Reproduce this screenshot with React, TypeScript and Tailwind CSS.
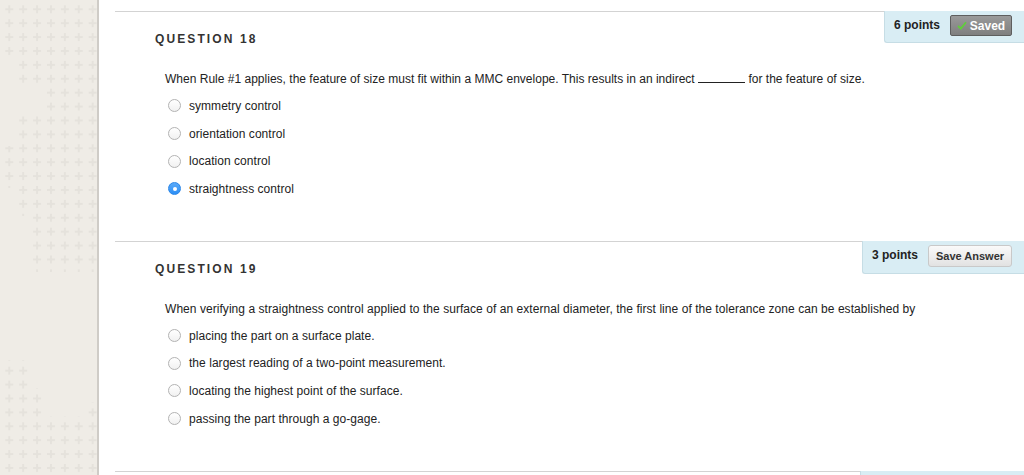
import React from "react";

const font = { fontFamily: '"Liberation Sans", Arial, Helvetica, sans-serif' };

function Radio({ checked }: { checked?: boolean }) {
  if (checked) {
    return (
      <span className="flex h-[13px] w-[13px] items-center justify-center rounded-full bg-gradient-to-b from-[#5aaaf9] to-[#2a8ef5] border border-[#2a86e8]">
        <span className="h-[4px] w-[4px] rounded-full bg-white" />
      </span>
    );
  }
  return (
    <span className="block h-[13px] w-[13px] rounded-full border border-[#b3b3b3] bg-gradient-to-b from-white to-[#f1f1f1]" />
  );
}

function Sidebar() {
  return (
    <div className="relative w-[99px] shrink-0 bg-[#efece6] border-r-2 border-[#cfccc7]">
      <svg className="absolute inset-0" width="97" height="475">
        <defs>
          <pattern id="plus" x="2.3" y="2.3" width="13.9" height="13.9" patternUnits="userSpaceOnUse">
            <rect x="3" y="6" width="8" height="2" fill="#e5e2dc" />
            <rect x="6" y="3" width="2" height="8" fill="#e5e2dc" />
          </pattern>
        </defs>
        <rect x="0" y="0" width="97" height="60" fill="url(#plus)" />
        <rect x="14" y="60" width="83" height="28" fill="url(#plus)" />
        <rect x="42" y="88" width="55" height="28" fill="url(#plus)" />
        <rect x="14" y="116" width="83" height="30" fill="url(#plus)" />
        <rect x="0" y="146" width="97" height="42" fill="url(#plus)" />
        <rect x="14" y="188" width="83" height="28" fill="url(#plus)" />
        <rect x="28" y="216" width="69" height="56" fill="url(#plus)" />
        <rect x="0" y="360" width="30" height="28" fill="url(#plus)" />
        <rect x="0" y="388" width="42" height="28" fill="url(#plus)" />
        <rect x="83" y="402" width="14" height="14" fill="url(#plus)" />
        <rect x="0" y="416" width="97" height="60" fill="url(#plus)" />
      </svg>
    </div>
  );
}

function PointsBox({
  points,
  saved,
  widthClass,
}: {
  points: string;
  saved?: boolean;
  widthClass: string;
}) {
  return (
    <div
      className={`${widthClass} flex items-start justify-end gap-[10px] self-start rounded-bl-[3px] border-l border-b border-[#c6dde5] bg-[#d9edf4] pt-[4px] pb-[6px] pr-[12px]`}
    >
      <span className="mt-[3px] text-[12px] font-bold leading-[14px] text-[#222]">{points}</span>
      {saved ? (
        <span className="flex h-[21px] w-[62px] items-center justify-center gap-[3px] rounded-[2px] border border-[#5e5e5e] bg-gradient-to-b from-[#9a9a9a] to-[#7f7f7f] text-[12px] font-bold text-white">
          <svg width="10" height="9" viewBox="0 0 10 9">
            <path d="M1 5 L3.8 7.6 L9 1.2" fill="none" stroke="#5fcf3a" strokeWidth="1.8" />
          </svg>
          Saved
        </span>
      ) : (
        <span className="flex h-[22px] w-[84px] items-center justify-center rounded-[3px] border border-[#c9c9c9] bg-gradient-to-b from-[#fafafa] to-[#e2e2e2] text-[11px] font-bold text-[#333]">
          Save Answer
        </span>
      )}
    </div>
  );
}

function Question({
  num,
  points,
  saved,
  text,
  options,
  checked,
  boxWidth,
  textTracking,
}: {
  num: number;
  points: string;
  saved?: boolean;
  text: React.ReactNode;
  options: string[];
  checked?: number;
  boxWidth: string;
  textTracking: string;
}) {
  return (
    <div className="flex flex-col">
      <div className="flex">
        <div className="flex-1 border-t border-[#d3d3d3] pt-[19px] pl-[40px]">
          <div className="text-[12px] font-bold leading-[16px] tracking-[2.1px] text-[#333]">
            QUESTION {num}
          </div>
        </div>
        <PointsBox points={points} saved={saved} widthClass={boxWidth} />
      </div>
      <div className={`${textTracking} pl-[50px] pt-[24px] text-[12px] leading-[16px] text-[#222] whitespace-nowrap`}>
        {text}
      </div>
      <div className="flex flex-col pl-[53px] pt-[5px] pb-[38px]">
        {options.map((o, i) => (
          <label key={i} className="flex h-[27.7px] items-center gap-[8px] text-[12px] tracking-[0.04px] text-[#222]">
            <Radio checked={checked === i} />
            <span>{o}</span>
          </label>
        ))}
      </div>
    </div>
  );
}

export default function App() {
  return (
    <div className="flex h-[475px] w-[1024px] overflow-hidden bg-white" style={font}>
      <Sidebar />
      <div className="flex flex-1 flex-col pl-[16px] pt-[11px]">
        <Question
          num={18}
          points="6 points"
          saved
          boxWidth="w-[140px]"
          textTracking="tracking-[0.01px]"
          text={
            <>
              When Rule #1 applies, the feature of size must fit within a MMC envelope. This results in an indirect{" "}
              <span className="inline-block w-[47px] border-b border-[#222] align-baseline" /> for the feature of size.
            </>
          }
          options={["symmetry control", "orientation control", "location control", "straightness control"]}
          checked={3}
        />
        <Question
          num={19}
          points="3 points"
          boxWidth="w-[162px]"
          textTracking="tracking-[0.05px]"
          text="When verifying a straightness control applied to the surface of an external diameter, the first line of the tolerance zone can be established by"
          options={[
            "placing the part on a surface plate.",
            "the largest reading of a two-point measurement.",
            "locating the highest point of the surface.",
            "passing the part through a go-gage.",
          ]}
        />
        <div className="flex">
          <div className="flex-1 border-t border-[#d3d3d3]" />
          <div className="h-[10px] w-[164px] border-l border-[#c6dde5] bg-[#d9edf4]" />
        </div>
      </div>
    </div>
  );
}
